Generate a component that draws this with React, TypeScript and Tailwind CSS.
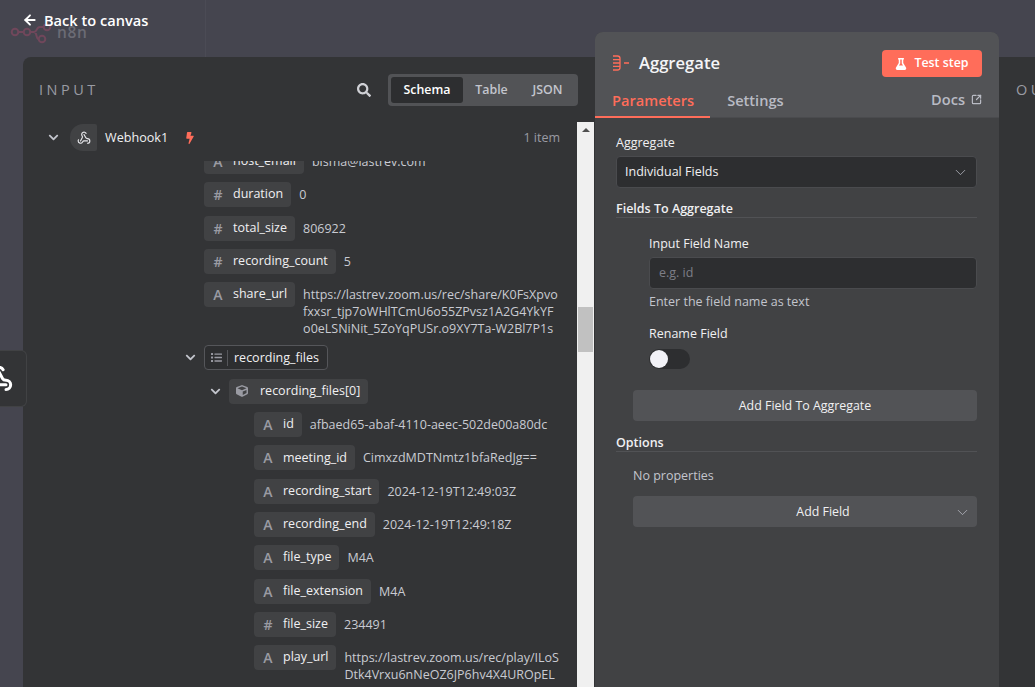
import { ArrowLeft, ChevronDown, SquareArrowOutUpRight, Webhook } from "lucide-react";
import { FaBolt, FaChevronDown, FaCube, FaFlask, FaList, FaSearch } from "react-icons/fa";

type Row = { type: "A" | "#"; name: string; value: string[] };

const topRows: Row[] = [
  { type: "A", name: "host_email", value: ["bisma@lastrev.com"] },
  { type: "#", name: "duration", value: ["0"] },
  { type: "#", name: "total_size", value: ["806922"] },
  { type: "#", name: "recording_count", value: ["5"] },
  {
    type: "A",
    name: "share_url",
    value: [
      "https://lastrev.zoom.us/rec/share/K0FsXpvo",
      "fxxsr_tjp7oWHlTCmU6o55ZPvsz1A2G4YkYF",
      "o0eLSNiNit_5ZoYqPUSr.o9XY7Ta-W2Bl7P1s",
    ],
  },
];

const fileRows: Row[] = [
  { type: "A", name: "id", value: ["afbaed65-abaf-4110-aeec-502de00a80dc"] },
  { type: "A", name: "meeting_id", value: ["CimxzdMDTNmtz1bfaRedJg=="] },
  { type: "A", name: "recording_start", value: ["2024-12-19T12:49:03Z"] },
  { type: "A", name: "recording_end", value: ["2024-12-19T12:49:18Z"] },
  { type: "A", name: "file_type", value: ["M4A"] },
  { type: "A", name: "file_extension", value: ["M4A"] },
  { type: "#", name: "file_size", value: ["234491"] },
  {
    type: "A",
    name: "play_url",
    value: ["https://lastrev.zoom.us/rec/play/ILoS", "Dtk4Vrxu6nNeOZ6JP6hv4X4UROpEL"],
  },
];

function SchemaRow({ row }: { row: Row }) {
  return (
    <div className="flex items-start mb-[8.3px]">
      <div className="flex items-center h-[25px] shrink-0 rounded-[4px] bg-[#414244] pl-[7px] pr-[8px] text-[12.5px] text-[#f0f0f2]">
        <span className="w-[14px] text-center text-[14px] text-[#9a9ba3] font-semibold">{row.type}</span>
        <span className="ml-[8px]">{row.name}</span>
      </div>
      <div className="ml-[8px] pt-[4px] text-[12.5px] leading-[17px] text-[#c9cbd2] whitespace-nowrap">
        {row.value.map((line) => (
          <div key={line}>{line}</div>
        ))}
      </div>
    </div>
  );
}

function Field({ label, children }: { label: string; children: React.ReactNode }) {
  return (
    <div>
      <div className="text-[12.5px] leading-[18px] text-[#f0f0f2]">{label}</div>
      {children}
    </div>
  );
}

function SectionTitle({ label }: { label: string }) {
  return (
    <div className="border-b border-[#515255] text-[12.5px] leading-[16px] font-semibold text-[#f0f0f2]">{label}</div>
  );
}

export default function App() {
  return (
    <div className="relative h-[687px] w-[1035px] overflow-hidden bg-[#45454f] font-['Open_Sans',sans-serif]">
      {/* canvas strip */}
      <div className="relative h-[57px]">
        <div className="absolute left-[205px] top-0 h-[57px] w-px bg-[#4b4b55]" />
        <svg className="absolute left-[10px] top-[24px] h-[20px] w-[42px]" viewBox="0 0 42 20" fill="none" stroke="#70475b" strokeWidth="2">
          <circle cx="5" cy="8" r="3.300" />
          <circle cx="17" cy="8" r="3.300" />
          <circle cx="32" cy="15" r="3.300" />
          <circle cx="37" cy="3" r="3.300" />
          <path d="M8.300 8h5.400M20.300 8h3.700c3.500 0 2-5 6-5h3.700M24 8c3.500 0 1.500 7 4.700 7" />
        </svg>
        <span className="absolute left-[57px] top-[22px] text-[15.500px] leading-[20px] font-semibold tracking-[0.6px] text-[#6b6b75]">n8n</span>
        <div className="absolute left-[22px] top-[11px] flex items-center gap-[6px] text-[14.6px] leading-[18px] font-semibold text-white">
          <ArrowLeft size={16} strokeWidth={2.8} />
          Back to canvas
        </div>
      </div>

      {/* dark panels */}
      <div className="ml-[23px] flex h-[630px] rounded-tl-[8px] bg-[#333436]">
        <div className="w-[554px] shrink-0 pt-[17px]">
          <div className="-mr-px flex h-[32px] items-center pl-[16px]">
            <span className="-mt-[1px] text-[14.5px] font-normal tracking-[3.5px] text-[#9a9ba3]">INPUT</span>
            <FaSearch className="ml-auto text-[14px] text-[#d0d1d6]" />
            <div className="ml-[17px] flex h-[32px] w-[190px] items-center rounded-[4px] bg-[#525356] p-[3px] text-[12.4px] font-semibold text-[#c3c5cd]">
              <span className="flex h-[26px] w-[72px] items-center justify-center rounded-[3px] bg-[#2d2e30] text-white">Schema</span>
              <span className="w-[57px] text-center">Table</span>
              <span className="w-[55px] text-center">JSON</span>
            </div>
          </div>
          <div className="mt-[18px] flex h-[27px] items-center pl-[25px] pr-[17px]">
            <FaChevronDown className="text-[11px] text-[#c3c5cd]" />
            <div className="ml-[11px] flex h-[27px] w-[27px] items-center justify-center rounded-l-[13px] rounded-r-[2px] bg-[#414244]">
              <Webhook size={14} className="text-[#e6e6ea]" />
            </div>
            <span className="ml-[8px] pt-px text-[12.6px] text-[#f0f0f2]">Webhook1</span>
            <FaBolt className="ml-[16px] text-[12px] text-[#ff6d5a]" />
            <span className="ml-auto pt-px text-[12.5px] text-[#9a9ba3]">1 item</span>
          </div>
          <div className="mt-[10px] h-[526px] overflow-hidden">
            <div className="-mt-[12px] pl-[181px]">
              {topRows.map((row) => (
                <SchemaRow key={row.name} row={row} />
              ))}
              <div className="relative mb-[8.3px] flex h-[25px] items-center">
                <FaChevronDown className="absolute -left-[19px] text-[11px] text-[#c3c5cd]" />
                <div className="flex h-[25px] items-center rounded-[4px] border border-[#55565a] bg-[#2d2e30] pl-[6px] pr-[8px] text-[12.5px] text-[#f0f0f2]">
                  <FaList className="text-[11px] text-[#9a9ba3]" />
                  <span className="ml-[5px] mr-[6px] h-[16px] w-px bg-[#55565a]" />
                  recording_files
                </div>
              </div>
              <div className="relative mb-[8.3px] ml-[25px] flex h-[25px] w-max items-center rounded-[4px] bg-[#414244] pl-[7px] pr-[8px] text-[12.5px] text-[#f0f0f2]">
                <FaChevronDown className="absolute -left-[19px] text-[11px] text-[#c3c5cd]" />
                <FaCube className="text-[12px] text-[#9a9ba3]" />
                <span className="ml-[12px]">recording_files[0]</span>
              </div>
              <div className="ml-[50px]">
                {fileRows.map((row) => (
                  <SchemaRow key={row.name} row={row} />
                ))}
              </div>
            </div>
          </div>
        </div>

        {/* scrollbar */}
        <div className="mt-[65px] flex h-[565px] w-[17px] shrink-0 flex-col items-center bg-[#f0f0f0]">
          <div className="mt-[6px] h-0 w-0 border-x-[4px] border-b-[4px] border-x-transparent border-b-[#505050]" />
          <div className="mt-[175px] h-[45px] w-[15px] bg-[#c1c1c1]" />
        </div>

        <div className="ml-[422px] pt-[22px] text-[14.5px] tracking-[3.5px] text-[#9a9ba3]">OUTPUT</div>
      </div>

      {/* left node tab */}
      <div className="absolute left-0 top-[350px] flex h-[57px] w-[27px] items-center justify-end overflow-hidden rounded-r-[6px] border border-l-0 border-[#414244] bg-[#333436]">
        <Webhook size={28} strokeWidth={2.6} className="mr-[13px] shrink-0 text-white" />
      </div>

      {/* node settings */}
      <div className="absolute left-[595px] top-[32px] h-[655px] w-[404px] overflow-hidden rounded-t-[8px] bg-[#414244]">
        <div className="h-[86px] border-b border-[#4a4b4e] bg-[#525356]">
          <div className="flex items-center px-[17px] pt-[18px]">
            <svg className="-mt-px h-[16px] w-[18px]" viewBox="0 0 18 16" fill="none" stroke="#ff6d5a" strokeWidth="1.3">
              <path d="M1 1h4.500c1.500 0 2.500 1 2.500 2.500v9c0 1.500-1 2.500-2.500 2.500H1M1 4.700h7M1 8h7M1 11.300h7M12 8h5" />
            </svg>
            <span className="-mt-[1px] ml-[9px] text-[16.6px] font-semibold text-[#f5f5f7]">Aggregate</span>
            <button className="ml-auto flex h-[27px] w-[100px] items-center justify-center gap-[7px] rounded-[4px] bg-[#ff6d5a] text-[12.4px] font-semibold text-white">
              <FaFlask className="text-[12px]" />
              Test step
            </button>
          </div>
          <div className="mt-[5px] flex h-[36px] items-start text-[14.6px] font-semibold text-[#b9bbc4]">
            <div className="h-[36px] border-b-2 border-[#ff6d5a] pl-[17px] pr-[16px] pt-[7px] leading-[22px] text-[#ff6d5a]">Parameters</div>
            <div className="ml-[17px] pt-[7px] leading-[22px]">Settings</div>
            <div className="ml-auto flex items-center gap-[6px] pr-[17px] pt-[6px] leading-[22px]">
              Docs
              <SquareArrowOutUpRight size={11} strokeWidth={2.6} />
            </div>
          </div>
        </div>

        <div className="pl-[21px] pr-[22px] pt-[16px]">
          <Field label="Aggregate">
            <div className="mt-[4px] flex h-[32px] items-center justify-between rounded-[4px] border border-[#4a4b4e] bg-[#2d2e30] pl-[8px] pr-[7px] text-[12.5px] text-[#f0f0f2]">
              Individual Fields
              <ChevronDown size={17} strokeWidth={1.1} className="text-[#b9bbc4]" />
            </div>
          </Field>
          <div className="mt-[13px]">
            <SectionTitle label="Fields To Aggregate" />
          </div>
          <div className="pl-[17px]">
            <div className="pl-[16px] pt-[17px]">
              <Field label="Input Field Name">
                <div className="mt-[4px] flex h-[32px] items-center rounded-[4px] border border-[#4a4b4e] bg-[#2d2e30] pl-[9px] text-[12.5px] text-[#7d7e87]">e.g. id</div>
              </Field>
              <div className="mt-[4px] text-[12.5px] leading-[17px] text-[#c3c5cd]">Enter the field name as text</div>
              <div className="mt-[15px] text-[12.5px] leading-[18px] text-[#f0f0f2]">Rename Field</div>
              <div className="mt-[6px] flex h-[20px] w-[41px] items-center rounded-full bg-[#2d2e30] pl-[1px]">
                <span className="h-[18px] w-[18px] rounded-full bg-[#f2f2f7]" />
              </div>
            </div>
            <button className="mt-[21px] flex h-[31px] w-full items-center justify-center rounded-[4px] bg-[#525356] pt-px text-[12.4px] font-medium text-[#f0f0f2]">
              Add Field To Aggregate
            </button>
          </div>
          <div className="mt-[14px]">
            <SectionTitle label="Options" />
          </div>
          <div className="pl-[17px]">
            <div className="mt-[15px] text-[12.5px] leading-[18px] text-[#c3c5cd]">No properties</div>
            <div className="relative mt-[11px] flex h-[31px] items-center justify-center rounded-[4px] bg-[#525356] pl-[36px] pt-px text-[12.4px] font-medium text-[#f0f0f2]">
              Add Field
              <ChevronDown size={17} strokeWidth={1.1} className="absolute right-[6px] text-[#b9bbc4]" />
            </div>
          </div>
        </div>
      </div>
    </div>
  );
}
